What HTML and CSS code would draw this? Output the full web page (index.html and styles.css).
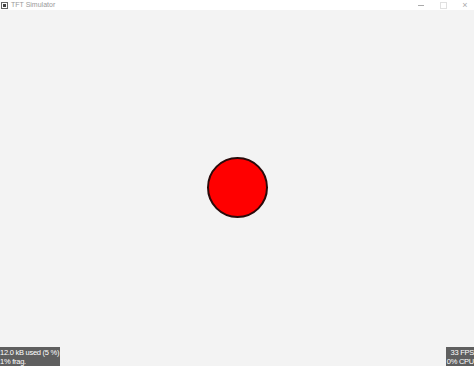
FILE: index.html
```html
<!DOCTYPE html>
<html>
<head>
<meta charset="utf-8">
<link rel="stylesheet" href="styles.css">
</head>
<body>
<div class="window">
  <div class="titlebar">
    <div class="title">
      <svg class="appicon" width="7" height="7" viewBox="0 0 7 7"><rect x="0.5" y="0.5" width="6" height="6" fill="#fff" stroke="#666"/><rect x="2" y="2" width="3" height="3" fill="#444"/></svg>
      <span class="title-text">TFT Simulator</span>
    </div>
    <div class="controls">
      <span class="ctl ctl-min"></span>
      <span class="ctl ctl-max"></span>
      <span class="ctl ctl-close">×</span>
    </div>
  </div>
  <div class="screen">
    <div class="circle"></div>
    <div class="stat stat-left">12.0 kB used (5 %)<br>1% frag.</div>
    <div class="stat stat-right">33 FPS<br>0% CPU</div>
  </div>
</div>
</body>
</html>
```
FILE: styles.css
```css
html, body {
  margin: 0;
  padding: 0;
  width: 474px;
  height: 366px;
  overflow: hidden;
  font-family: "Liberation Sans", Arial, sans-serif;
}
.window {
  display: flex;
  flex-direction: column;
  width: 474px;
  height: 366px;
}
.titlebar {
  height: 10px;
  background: #ffffff;
  display: flex;
  justify-content: space-between;
  align-items: center;
}
.title {
  display: flex;
  align-items: center;
  gap: 3px;
  padding-left: 1px;
}
.appicon { display: block; }
.title-text {
  font-size: 7px;
  line-height: 8px;
  color: #999;
}
.controls {
  display: flex;
  align-items: center;
  gap: 14px;
  padding-right: 5px;
}
.ctl {
  display: block;
  width: 8px;
  height: 8px;
  position: relative;
}
.ctl-min::before {
  content: "";
  position: absolute;
  left: 1px; right: 1px; top: 4px;
  height: 1px;
  background: #aaa;
}
.ctl-max::before {
  content: "";
  position: absolute;
  left: 1px; top: 1px;
  width: 5px; height: 5px;
  border: 1px solid #e0e0e0;
}
.ctl-close {
  font-size: 9px;
  line-height: 8px;
  color: #aaa;
  text-align: center;
}
.screen {
  flex: 1;
  background: #f3f3f3;
  position: relative;
  display: flex;
  align-items: center;
  justify-content: center;
}
.circle {
  width: 57px;
  height: 57px;
  border-radius: 50%;
  background: #ff0000;
  border: 2px solid #2a0a0a;
  margin-top: -1px;
}
.stat {
  position: absolute;
  bottom: 0;
  background: #5f5f5f;
  color: #ffffff;
  font-size: 7.5px;
  line-height: 9px;
  letter-spacing: -0.25px;
  padding: 1px 1px 0 0;
  white-space: nowrap;
}
.stat-left { left: 0; }
.stat-right { right: 0; text-align: right; padding: 1px 0 0 1px; }
```
